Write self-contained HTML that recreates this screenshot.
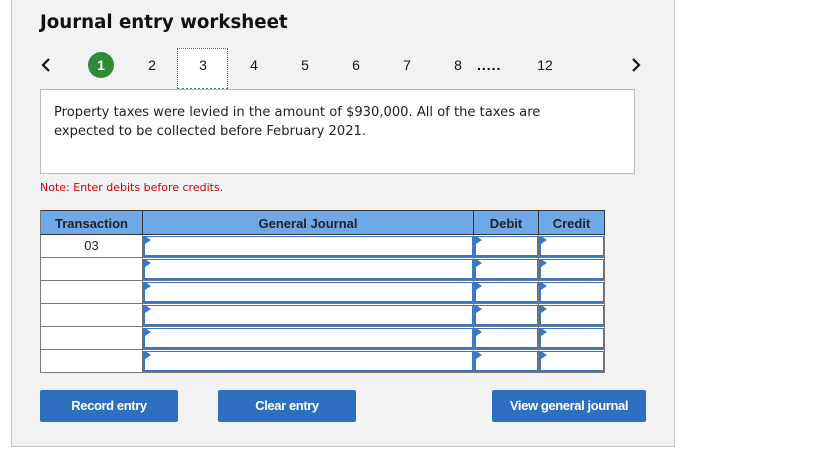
<!DOCTYPE html>
<html><head><style>
body{margin:0;width:813px;height:449px;background:#fff;position:relative;font-family:"Liberation Sans",Arial,sans-serif;overflow:hidden}
.a{position:absolute}
#panel{left:11px;top:-1px;width:662px;height:446px;background:#f2f2f2;border:1px solid #c8c8c8}
h1{position:absolute;left:40px;top:12px;margin:0;font-family:"DejaVu Sans",sans-serif;font-size:18.2px;font-weight:bold;color:#111}
.n{position:absolute;top:57px;font-size:14px;color:#111;width:20px;text-align:center}
.btn{position:absolute;top:390px;height:32px;background:#2f6fbf;border-radius:2px;color:#fff;font-weight:bold;font-size:13px;text-align:center;line-height:32px;letter-spacing:-0.4px}
.hd{position:absolute;top:210px;height:25px;background:#6fa8e6;border:1px solid #333;border-left:none;box-sizing:border-box;font-weight:bold;font-size:13px;color:#222;text-align:center;line-height:25px}
.c{position:absolute;height:23px;box-sizing:border-box;background:#fff}
.tc{border:1px solid #777;border-top:none}
.ic{border:1px solid #777;border-top:none;border-left:none}
.ic i{position:absolute;left:0;top:1px;right:0;bottom:0;border-left:2px solid #3b76c0;border-bottom:2px solid #3b76c0;border-top:1px solid #3b76c0;border-right:1px solid #3b76c0}
.ic b{position:absolute;left:2px;top:1px;width:0;height:0;border-left:6px solid #3b76c0;border-top:4px solid transparent;border-bottom:4px solid transparent}
</style></head><body>
<div id="panel" class="a"></div>
<h1>Journal entry worksheet</h1>
<svg class="a" style="left:40px;top:57px" width="12" height="16"><path d="M9 2 L3 8 L9 14" stroke="#111" stroke-width="2.2" fill="none"/></svg>
<div class="a" style="left:88px;top:52px;width:26px;height:26px;border-radius:50%;background:#2f8a3a;color:#fff;font-size:14px;text-align:center;line-height:26px;font-weight:bold">1</div>
<div class="n" style="left:142px">2</div>
<div class="a" style="left:177px;top:48px;width:51px;height:42px;background:#fff;border:1px dotted #2f6fbf;border-bottom:2px dotted #2f6fbf;box-sizing:border-box"></div>
<div class="n" style="left:193px">3</div>
<div class="n" style="left:244px">4</div>
<div class="n" style="left:295px">5</div>
<div class="n" style="left:346px">6</div>
<div class="n" style="left:397px">7</div>
<div class="n" style="left:448px">8</div>
<div class="a" style="left:477px;top:57px;font-size:14px;font-weight:bold;letter-spacing:1px">.....</div>
<div class="n" style="left:534px;width:22px">12</div>
<svg class="a" style="left:630px;top:57px" width="12" height="16"><path d="M3 2 L9 8 L3 14" stroke="#111" stroke-width="2.2" fill="none"/></svg>
<div class="a" style="left:40px;top:89px;width:595px;height:85px;background:#fff;border:1px solid #bbb;box-sizing:border-box"></div>
<div class="a" style="left:54px;top:103px;font-family:'DejaVu Sans',sans-serif;font-size:13.1px;line-height:19px;color:#222">Property taxes were levied in the amount of $930,000. All of the taxes are<br>expected to be collected before February 2021.</div>
<div class="a" style="left:40px;top:181px;font-family:'DejaVu Sans',sans-serif;font-size:11px;color:#c00">Note: Enter debits before credits.</div>
<div class="hd" style="left:40px;width:103px;border-left:1px solid #777">Transaction</div>
<div class="hd" style="left:143px;width:331px">General Journal</div>
<div class="hd" style="left:474px;width:65px">Debit</div>
<div class="hd" style="left:539px;width:66px">Credit</div>
<div id="rows"></div>
<script>
var h='';for(var r=0;r<6;r++){var y=235+r*23;
h+='<div class="c tc" style="left:40px;top:'+y+'px;width:103px;font-size:13px;text-align:center;line-height:22px;color:#222">'+(r==0?'03':'')+'</div>';
[[143,331],[474,65],[539,66]].forEach(function(c){h+='<div class="c ic" style="left:'+c[0]+'px;top:'+y+'px;width:'+c[1]+'px"><i></i><b></b></div>';});}
document.getElementById('rows').innerHTML=h;
</script>
<div class="btn" style="left:40px;width:138px">Record entry</div>
<div class="btn" style="left:218px;width:138px">Clear entry</div>
<div class="btn" style="left:492px;width:154px">View general journal</div>
</body></html>
